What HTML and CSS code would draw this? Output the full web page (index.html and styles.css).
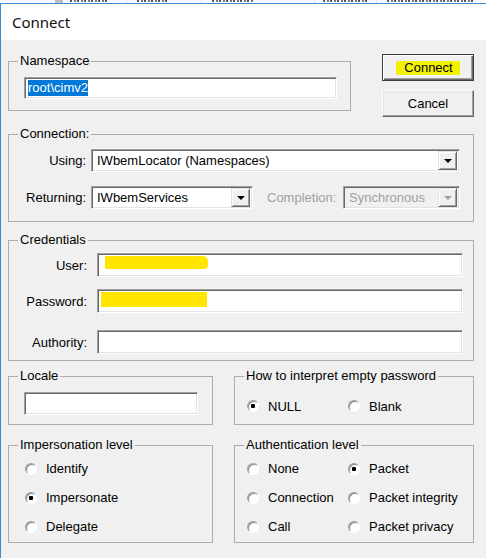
FILE: index.html
```html
<!DOCTYPE html>
<html lang="en">
<head>
  <meta charset="UTF-8">
  <meta name="viewport" content="width=device-width, initial-scale=1.0">
  <title>Connect</title>
  <link rel="stylesheet" href="styles.css">
</head>
<body>
  <!-- list view of the window behind, only the bottom of its header shows -->
  <div class="behind">
    <span class="col c1"><i class="grip"></i><i class="ink w37"></i></span>
    <span class="col c2"><i class="ink w31"></i></span>
    <span class="col c3"><i class="ink w41"></i></span>
    <span class="col c4"><i class="ink w44"></i></span>
    <span class="col c5"><i class="ink w86"></i></span>
  </div>

  <div class="window">
    <div class="titlebar">Connect</div>

    <div class="client">
      <div class="top-row">
        <fieldset class="group namespace">
          <legend>Namespace</legend>
          <div class="edit ns-edit"><span class="sel">root\cimv2</span></div>
        </fieldset>
        <div class="buttons">
          <button class="btn default"><span class="marker">Connect</span></button>
          <button class="btn">Cancel</button>
        </div>
      </div>

      <fieldset class="group connection">
        <legend>Connection:</legend>
        <div class="field">
          <label class="lbl">Using:</label>
          <div class="combo using">
            <span class="val">IWbemLocator (Namespaces)</span>
            <span class="drop"></span>
          </div>
        </div>
        <div class="field second">
          <label class="lbl">Returning:</label>
          <div class="combo returning">
            <span class="val">IWbemServices</span>
            <span class="drop"></span>
          </div>
          <label class="lbl-off">Completion:</label>
          <div class="combo completion off">
            <span class="val">Synchronous</span>
            <span class="drop"></span>
          </div>
        </div>
      </fieldset>

      <fieldset class="group credentials">
        <legend>Credentials</legend>
        <div class="field">
          <label class="lbl">User:</label>
          <div class="edit cred"><span class="hl hl-user"></span></div>
        </div>
        <div class="field pw">
          <label class="lbl">Password:</label>
          <div class="edit cred"><span class="hl hl-pass"></span></div>
        </div>
        <div class="field auth">
          <label class="lbl">Authority:</label>
          <div class="edit cred"></div>
        </div>
      </fieldset>

      <div class="pair">
        <fieldset class="group locale">
          <legend>Locale</legend>
          <div class="edit locale-edit"></div>
        </fieldset>
        <fieldset class="group empty-pw">
          <legend>How to interpret empty password</legend>
          <div class="opts">
            <label class="opt"><input type="radio" name="empty" checked>NULL</label>
            <label class="opt"><input type="radio" name="empty">Blank</label>
          </div>
        </fieldset>
      </div>

      <div class="pair levels">
        <fieldset class="group imperson">
          <legend>Impersonation level</legend>
          <div class="list">
            <label class="opt"><input type="radio" name="imp">Identify</label>
            <label class="opt"><input type="radio" name="imp" checked>Impersonate</label>
            <label class="opt"><input type="radio" name="imp">Delegate</label>
          </div>
        </fieldset>
        <fieldset class="group authn">
          <legend>Authentication level</legend>
          <div class="opts">
            <label class="opt"><input type="radio" name="auth">None</label>
            <label class="opt"><input type="radio" name="auth" checked>Packet</label>
            <label class="opt"><input type="radio" name="auth">Connection</label>
            <label class="opt"><input type="radio" name="auth">Packet integrity</label>
            <label class="opt"><input type="radio" name="auth">Call</label>
            <label class="opt"><input type="radio" name="auth">Packet privacy</label>
          </div>
        </fieldset>
      </div>
    </div>
  </div>
</body>
</html>
```

FILE: styles.css
```css
/* General */
* {
  box-sizing: border-box;
}
html, body {
  margin: 0;
}
body {
  width: 486px;
  height: 558px;
  overflow: hidden;
  background: #f0f0f0;
  font-family: "Liberation Sans", Arial, sans-serif;
  font-size: 13px;
  color: #000;
}

/* Window behind */
.behind {
  display: flex;
  height: 3px;
  overflow: hidden;
  background: #fff;
}
.behind .col {
  display: flex;
  align-items: flex-start;
  border-right: 1px solid #e3e3e3;
}
.behind .c1 { width: 127px; }
.behind .c2 { width: 75px; padding-left: 10px; }
.behind .c3 { width: 113px; padding-left: 10px; }
.behind .c4 { width: 62px; padding-left: 8px; }
.behind .c5 { flex: 1; padding-left: 10px; border-right: none; }
.behind .grip {
  width: 8px;
  height: 3px;
  margin: 0 7px 0 55px;
  background: #bdbdbd;
}
.behind .ink {
  height: 2px;
  background: repeating-linear-gradient(90deg, #555 0 2px, transparent 2px 4px, #777 4px 6px, transparent 6px 7px);
}
.w31 { width: 31px; }
.w37 { width: 37px; }
.w41 { width: 41px; }
.w44 { width: 44px; }
.w86 { width: 86px; }

/* Dialog frame */
.window {
  height: 555px;
  border-top: 1px solid #3a8ad6;
  border-left: 1px solid #3a8ad6;
}
.titlebar {
  height: 36px;
  padding-left: 11px;
  background: #fff;
  font-family: "Noto Sans", sans-serif;
  font-size: 15px;
  line-height: 36px;
  color: #111;
}
.client {
  padding: 13px 12px 0 7px;
}

/* Group boxes */
.group {
  margin: 0;
  padding: 0;
  min-width: 0;
  border: 1px solid #acacac;
}
.group legend {
  margin-left: 9px;
  padding: 0 2px;
  line-height: 16px;
}

/* Sunken edit box */
.edit, .combo {
  background: #fff;
  border: 1px solid;
  border-color: #a0a0a0 #fff #fff #a0a0a0;
  box-shadow: inset 1px 1px #696969, inset -1px -1px #e3e3e3;
}

/* Namespace + buttons */
.top-row {
  display: flex;
  align-items: flex-start;
}
.namespace {
  width: 343px;
  padding: 8px 0 11px 0;
}
.ns-edit {
  display: flex;
  align-items: center;
  width: 313px;
  height: 22px;
  margin-left: 15px;
  padding-left: 3px;
}
.sel {
  background: #0078d7;
  color: #fff;
  line-height: 16px;
}
.buttons {
  display: flex;
  flex-direction: column;
  gap: 9px;
  width: 92px;
  margin: 1px 0 0 31px;
}
.btn {
  height: 27px;
  padding: 0;
  font: inherit;
  color: #000;
  background: #f0f0f0;
  border: 1px solid;
  border-color: #fff #696969 #696969 #fff;
  box-shadow: inset -1px -1px #a0a0a0, inset 1px 1px #e3e3e3;
}
.btn.default {
  border: 1px solid #3c3c3c;
  box-shadow: inset 1px 1px #fff, inset -1px -1px #696969, inset -2px -2px #a0a0a0;
}
.marker {
  display: inline-block;
  padding: 0 7px 0 8px;
  line-height: 14px;
  background: #f2f200;
  border-radius: 2px;
}

/* Label + control rows */
.field {
  display: flex;
  align-items: center;
}
.lbl {
  width: 77px;
  margin-right: 5px;
  text-align: right;
}
.connection {
  margin-top: 9px;
  padding: 7px 13px 12px 0;
}
.connection .second {
  margin-top: 14px;
}
.combo {
  display: flex;
  height: 23px;
  padding: 2px;
}
.combo .val {
  flex: 1;
  padding-left: 3px;
  line-height: 17px;
  white-space: nowrap;
  overflow: hidden;
}
.combo .drop {
  position: relative;
  width: 19px;
  margin: -1px 0;
  background: #f0f0f0;
  border: 1px solid;
  border-color: #e3e3e3 #696969 #696969 #e3e3e3;
  box-shadow: inset 1px 1px #fff, inset -1px -1px #a0a0a0;
}
.combo .drop::after {
  content: "";
  position: absolute;
  left: 5px;
  top: 7px;
  border-left: 4px solid transparent;
  border-right: 4px solid transparent;
  border-top: 4px solid #000;
}
.using {
  flex: 1;
}
.returning {
  width: 162px;
}
.lbl-off {
  margin-left: 14px;
  color: #a0a0a0;
}
.completion {
  width: 117px;
  margin-left: auto;
}
.combo.off {
  background: #f0f0f0;
  color: #a0a0a0;
}
.combo.off .drop::after {
  border-top-color: #a0a0a0;
}

/* Credentials */
.credentials {
  margin-top: 10px;
  padding: 5px 10px 6px 0;
}
.credentials .lbl {
  width: 78px;
  margin-right: 10px;
}
.credentials .pw {
  margin-top: 12px;
}
.credentials .auth {
  margin-top: 17px;
}
.cred {
  flex: 1;
  height: 24px;
}
.hl {
  display: block;
  background: #ffe500;
}
.hl-user {
  width: 103px;
  height: 13px;
  margin: 2px 0 0 7px;
  border-radius: 1px 5px 4px 1px;
}
.hl-pass {
  width: 106px;
  height: 15px;
  margin: 2px 0 0 3px;
}

/* Bottom pairs */
.pair {
  display: flex;
  gap: 21px;
  margin-top: 7px;
}
.pair.levels {
  margin-top: 12px;
}
.locale, .imperson {
  width: 205px;
}
.empty-pw, .authn {
  flex: 1;
}
.locale {
  padding: 8px 0 9px 0;
}
.locale-edit {
  width: 174px;
  height: 23px;
  margin-left: 15px;
}
.empty-pw {
  padding: 10px 0 6px 0;
}
.opts {
  display: grid;
  grid-template-columns: 101px auto;
  margin-left: 12px;
}
.opt {
  display: flex;
  align-items: center;
  height: 29px;
}
.empty-pw .opt {
  height: 24px;
}
.imperson, .authn {
  padding: 1px 0 1px 0;
}
.list {
  margin-left: 16px;
}

/* Classic radio */
.opt input {
  appearance: none;
  width: 12px;
  height: 12px;
  margin: 0 9px 0 0;
  border-radius: 50%;
  background: #fff;
  border: 1px solid;
  border-color: #a0a0a0 #fff #fff #a0a0a0;
  box-shadow: inset 1px 1px #8a8a8a;
}
.opt input:checked {
  background: radial-gradient(circle, #000 0 2px, #fff 2.5px);
}
```
